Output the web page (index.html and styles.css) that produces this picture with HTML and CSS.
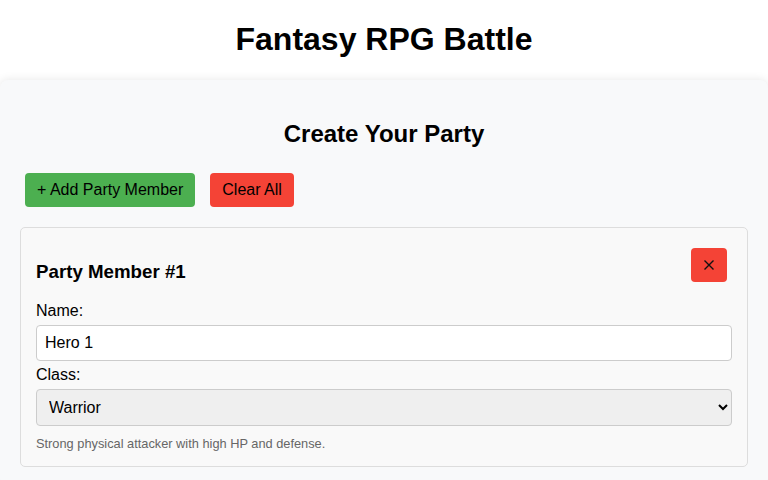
FILE: index.html
```html
<!DOCTYPE html>
<html>
<head>
<meta charset="utf-8">
<link rel="stylesheet" href="styles.css">
</head>
<body>
<header class="site-header">
  <h1 class="title">Fantasy RPG Battle</h1>
</header>
<section class="party-section">
  <h2 class="section-title">Create Your Party</h2>
  <div class="actions">
    <button class="btn btn-add">+ Add Party Member</button>
    <button class="btn btn-clear">Clear All</button>
  </div>
  <div class="member-card">
    <div class="card-header">
      <h3 class="card-title">Party Member #1</h3>
      <button class="btn btn-remove" aria-label="Remove">
        <svg width="12" height="12" viewBox="0 0 12 12"><path d="M1.5 1.5L10.5 10.5M10.5 1.5L1.5 10.5" stroke="#111" stroke-width="1.4" fill="none"/></svg>
      </button>
    </div>
    <label class="field-label">Name:</label>
    <input class="text-input" type="text" value="Hero 1">
    <label class="field-label">Class:</label>
    <select class="class-select">
      <option>Warrior</option>
      <option>Mage</option>
      <option>Rogue</option>
      <option>Cleric</option>
    </select>
    <p class="class-desc">Strong physical attacker with high HP and defense.</p>
  </div>
</section>
</body>
</html>
```
FILE: styles.css
```css
html, body {
  margin: 0;
  padding: 0;
  background: #ffffff;
  font-family: "Liberation Sans", Arial, sans-serif;
  color: #000;
}
.site-header {
  background: #fff;
  text-align: center;
}
.title {
  margin: 0;
  padding: 21px 0 22px;
  font-size: 32px;
  line-height: 37px;
  font-weight: bold;
}
.party-section {
  box-sizing: border-box;
  background: #f8f9fa;
  border-radius: 8px;
  box-shadow: 0 0 10px rgba(0, 0, 0, 0.1);
  padding: 20px;
  min-height: 400px;
}
.section-title {
  margin: 20px 0 20px;
  text-align: center;
  font-size: 24px;
  line-height: 28px;
  font-weight: bold;
}
.actions {
  display: flex;
  gap: 5px;
  margin-bottom: 15px;
}
.btn {
  font-family: "Liberation Sans", Arial, sans-serif;
  font-size: 16px;
  line-height: 18px;
  padding: 8px 12px;
  margin: 5px;
  border: none;
  border-radius: 4px;
  color: #000;
  cursor: pointer;
}
.btn-add {
  background: #4caf50;
}
.btn-clear {
  background: #f44336;
}
.member-card {
  background: #f9f9f9;
  border: 1px solid #ddd;
  border-radius: 5px;
  padding: 15px;
}
.card-header {
  display: flex;
  justify-content: space-between;
  align-items: flex-start;
}
.card-title {
  margin: 18px 0 19px;
  font-size: 18.72px;
  line-height: 22px;
  font-weight: bold;
}
.btn-remove {
  background: #f44336;
  width: 36px;
  height: 34px;
  padding: 0;
  display: flex;
  align-items: center;
  justify-content: center;
}
.field-label {
  display: block;
  font-size: 16px;
  line-height: 18px;
  margin-bottom: 5px;
}
.text-input {
  display: block;
  box-sizing: border-box;
  width: 100%;
  height: 36px;
  padding: 8px;
  font-family: "Liberation Sans", Arial, sans-serif;
  font-size: 16px;
  border: 1px solid #ccc;
  border-radius: 4px;
  background: #fff;
  margin: 0 0 5px;
  color: #000;
}
.class-select {
  display: block;
  box-sizing: border-box;
  width: 100%;
  height: 37px;
  padding: 0 8px;
  font-family: "Liberation Sans", Arial, sans-serif;
  font-size: 16px;
  border: 1px solid #ccc;
  border-radius: 4px;
  background-color: #efefef;
  color: #000;
}
.class-desc {
  margin: 10px 0 0;
  font-size: 12.8px;
  line-height: 15px;
  color: #666;
}
```
